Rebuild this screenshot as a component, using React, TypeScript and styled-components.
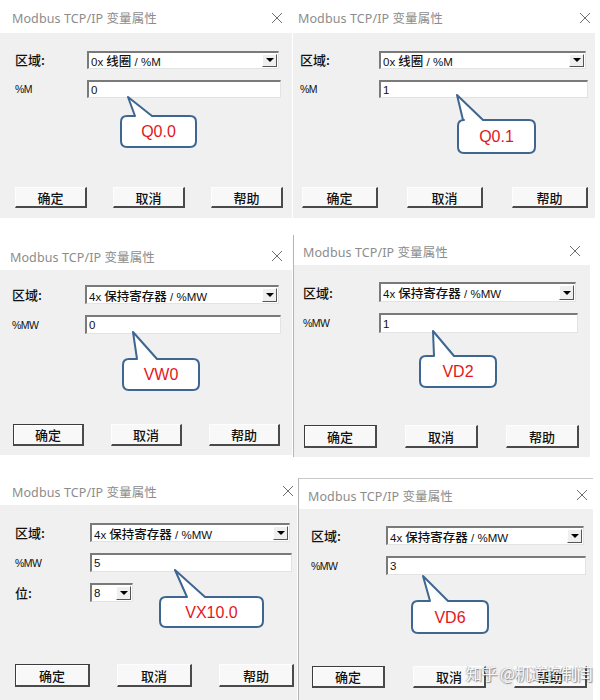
import React from 'react';
import styled, { createGlobalStyle } from 'styled-components';

const GlobalStyle = createGlobalStyle`
  html, body {
    margin: 0;
    padding: 0;
    background: #ffffff;
  }
  body {
    font-family: 'Noto Sans', 'Noto Sans CJK SC', sans-serif;
  }
`;

const CJK = `'Noto Sans CJK SC', 'Noto Sans', sans-serif`;
const SANS = `'Liberation Sans', 'Noto Sans CJK SC', sans-serif`;

const Page = styled.div`
  position: relative;
  width: 600px;
  height: 700px;
  overflow: hidden;
  background: #fff;
`;

const Row = styled.div<{ $h: number }>`
  display: flex;
  height: ${(p) => p.$h}px;
`;

const Cell = styled.div<{ $w: number; $top: number }>`
  width: ${(p) => p.$w}px;
  padding-top: ${(p) => p.$top}px;
  box-sizing: border-box;
  flex-shrink: 0;
`;

const Window = styled.div<{ $w: number; $edge?: boolean; $topEdge?: boolean }>`
  width: ${(p) => p.$w}px;
  display: flex;
  flex-direction: column;
  background: #fff;
  border-left: ${(p) => (p.$edge ? '1px solid #b5b5b5' : 'none')};
  border-top: ${(p) => (p.$topEdge ? '1px solid #c8c8c8' : 'none')};
  box-sizing: border-box;
`;

const TitleBar = styled.div<{ $h: number; $pad: number; $closeRight: number }>`
  height: ${(p) => p.$h}px;
  display: flex;
  align-items: center;
  justify-content: space-between;
  padding: 2px ${(p) => p.$closeRight}px 0 ${(p) => p.$pad}px;
  box-sizing: border-box;
`;

const Title = styled.span`
  font-family: 'Noto Sans', 'Noto Sans CJK SC', sans-serif;
  font-size: 12.5px;
  color: #8c8c8c;
  letter-spacing: 0.1px;
`;

const Body = styled.div<{ $h: number; $top: number; $bottom: number }>`
  position: relative;
  height: ${(p) => p.$h}px;
  background: #f0f0f0;
  padding: ${(p) => p.$top}px 0 ${(p) => p.$bottom}px;
  box-sizing: border-box;
  display: flex;
  flex-direction: column;
`;

const Form = styled.div<{ $label: number; $field: number; $width: number }>`
  display: grid;
  grid-template-columns: ${(p) => p.$field - p.$label}px ${(p) => p.$width}px;
  padding-left: ${(p) => p.$label}px;
  row-gap: 11px;
  align-items: center;
`;

const Label = styled.span<{ $small?: boolean }>`
  font-family: ${(p) => (p.$small ? SANS : CJK)};
  font-size: ${(p) => (p.$small ? '10.5px' : '13px')};
  font-weight: ${(p) => (p.$small ? 400 : 500)};
  color: #111;
  letter-spacing: ${(p) => (p.$small ? '-0.5px' : '0')};
`;

const Sunken = styled.div<{ $h: number; $w?: number }>`
  height: ${(p) => p.$h}px;
  width: ${(p) => (p.$w ? `${p.$w}px` : 'auto')};
  background: #fff;
  border-top: 2px solid #7a7a7a;
  border-left: 2px solid #7a7a7a;
  border-right: 1px solid #e3e3e3;
  border-bottom: 1px solid #e3e3e3;
  box-sizing: border-box;
  display: flex;
  align-items: center;
  padding-left: 2px;
  font-family: ${SANS};
  font-size: 11.5px;
  color: #111;
`;

const SelectText = styled.span`
  flex: 1;
  font-family: ${SANS};
  font-size: 11.5px;
  white-space: nowrap;
  overflow: hidden;
  & b {
    font-family: ${CJK};
    font-weight: 500;
    font-size: 12.5px;
  }
`;

const DropButton = styled.div`
  width: 15px;
  height: calc(100% - 2px);
  margin-right: 1px;
  background: #efefef;
  border-top: 1px solid #fff;
  border-left: 1px solid #fff;
  border-right: 1px solid #555;
  border-bottom: 1px solid #555;
  box-sizing: border-box;
  display: flex;
  align-items: center;
  justify-content: center;
  &::after {
    content: '';
    border-left: 4px solid transparent;
    border-right: 4px solid transparent;
    border-top: 4px solid #000;
  }
`;

const Buttons = styled.div<{ $left: number; $gap: number }>`
  margin-top: auto;
  display: flex;
  gap: ${(p) => p.$gap}px;
  padding-left: ${(p) => p.$left}px;
`;

const Button = styled.div<{ $w: number; $h: number; $default?: boolean }>`
  width: ${(p) => p.$w}px;
  height: ${(p) => p.$h}px;
  box-sizing: border-box;
  background: #f8f8f8;
  border-top: 1px solid ${(p) => (p.$default ? '#3c3c3c' : '#fdfdfd')};
  border-left: 1px solid ${(p) => (p.$default ? '#3c3c3c' : '#fdfdfd')};
  border-right: 2px solid #4a4a4a;
  border-bottom: 2px solid #4a4a4a;
  box-shadow: ${(p) => (p.$default ? 'inset 1px 1px 0 #fff' : 'none')};
  display: flex;
  align-items: center;
  justify-content: center;
  font-family: ${CJK};
  font-size: 13px;
  font-weight: 500;
  color: #111;
`;

const CalloutBox = styled.div`
  position: absolute;
  display: flex;
  align-items: center;
  justify-content: center;
  font-family: ${SANS};
  font-size: 16px;
  color: #e3161d;
  & svg {
    position: absolute;
    inset: 0;
    overflow: visible;
  }
  & span {
    position: relative;
    padding-top: 1px;
  }
`;

const Watermark = styled.div`
  position: absolute;
  left: 466px;
  top: 661px;
  font-family: ${CJK};
  font-size: 16px;
  color: rgba(255, 255, 255, 0.9);
  text-shadow: 1px 1px 1px rgba(60, 60, 60, 0.55), -1px 0 1px rgba(60, 60, 60, 0.35);
  letter-spacing: -0.5px;
  white-space: nowrap;
`;

const CloseIcon = () => (
  <svg width="12" height="12" viewBox="0 0 12 12">
    <path d="M1 1L11 11M11 1L1 11" stroke="#6e6e6e" strokeWidth="1" fill="none" />
  </svg>
);

interface CalloutProps {
  left: number;
  top: number;
  w: number;
  h: number;
  tip: [number, number];
  base: [number, number];
  text: string;
}

const Callout = ({ left, top, w, h, tip, base, text }: CalloutProps) => {
  const r = 6;
  const d = `M${r},0 L${base[0]},0 L${tip[0]},${tip[1]} L${base[1]},0 L${w - r},0 Q${w},0 ${w},${r} L${w},${h - r} Q${w},${h} ${w - r},${h} L${r},${h} Q0,${h} 0,${h - r} L0,${r} Q0,0 ${r},0 Z`;
  return (
    <CalloutBox style={{ left, top, width: w, height: h }}>
      <svg width={w} height={h}>
        <path d={d} fill="#fff" stroke="#3e6690" strokeWidth="2" strokeLinejoin="round" />
      </svg>
      <span>{text}</span>
    </CalloutBox>
  );
};

interface DialogSpec {
  cellW: number;
  cellTop: number;
  winW: number;
  edge?: boolean;
  topEdge?: boolean;
  titleH: number;
  titlePad: number;
  closeRight: number;
  bodyH: number;
  bodyTop: number;
  bodyBottom: number;
  label: number;
  field: number;
  fieldW: number;
  fieldH: number;
  area: 'coil' | 'hold';
  unit: string;
  value: string;
  bit?: boolean;
  btnLeft: number;
  btnGap: number;
  btnW: number;
  btnH: number;
  defaultBtn?: boolean;
  callout: CalloutProps;
}

const Dialog = ({ s }: { s: DialogSpec }) => (
  <Cell $w={s.cellW} $top={s.cellTop}>
    <Window $w={s.winW} $edge={s.edge} $topEdge={s.topEdge}>
      <TitleBar $h={s.titleH} $pad={s.titlePad} $closeRight={s.closeRight}>
        <Title>Modbus TCP/IP 变量属性</Title>
        <CloseIcon />
      </TitleBar>
      <Body $h={s.bodyH} $top={s.bodyTop} $bottom={s.bodyBottom}>
        <Form $label={s.label} $field={s.field} $width={s.fieldW}>
          <Label>区域:</Label>
          <Sunken $h={s.fieldH} style={{ marginRight: 2 }}>
            <SelectText>
              {s.area === 'coil' ? (
                <>0x <b>线圈</b> / %M</>
              ) : (
                <>4x <b>保持寄存器</b> / %MW</>
              )}
            </SelectText>
            <DropButton />
          </Sunken>
          <Label $small>{s.unit}</Label>
          <Sunken $h={s.fieldH}>{s.value}</Sunken>
          {s.bit && (
            <>
              <Label>位:</Label>
              <Sunken $h={s.fieldH} $w={43}>
                <SelectText>8</SelectText>
                <DropButton />
              </Sunken>
            </>
          )}
        </Form>
        <Buttons $left={s.btnLeft} $gap={s.btnGap}>
          <Button $w={s.btnW} $h={s.btnH} $default={s.defaultBtn}>确定</Button>
          <Button $w={s.btnW} $h={s.btnH}>取消</Button>
          <Button $w={s.btnW} $h={s.btnH}>帮助</Button>
        </Buttons>
        <Callout {...s.callout} />
      </Body>
    </Window>
  </Cell>
);

const dialogs: DialogSpec[] = [
  {
    cellW: 293, cellTop: 0, winW: 292, titleH: 33, titlePad: 12, closeRight: 9,
    bodyH: 185, bodyTop: 17, bodyBottom: 10, label: 15, field: 87, fieldW: 194, fieldH: 18,
    area: 'coil', unit: '%M', value: '0',
    btnLeft: 15, btnGap: 26, btnW: 72, btnH: 21,
    callout: { left: 121, top: 83, w: 75, h: 31, tip: [7, -19], base: [14, 31], text: 'Q0.0' },
  },
  {
    cellW: 307, cellTop: 0, winW: 302, titleH: 33, titlePad: 5, closeRight: 4,
    bodyH: 185, bodyTop: 17, bodyBottom: 10, label: 7, field: 86, fieldW: 209, fieldH: 18,
    area: 'coil', unit: '%M', value: '1',
    btnLeft: 9, btnGap: 29, btnW: 76, btnH: 21,
    callout: { left: 165, top: 87, w: 77, h: 33, tip: [-1, -25], base: [5, 25], text: 'Q0.1' },
  },
  {
    cellW: 293, cellTop: 15, winW: 292, titleH: 30, titlePad: 10, closeRight: 9,
    bodyH: 185, bodyTop: 15, bodyBottom: 9, label: 12, field: 85, fieldW: 196, fieldH: 19,
    area: 'hold', unit: '%MW', value: '0',
    btnLeft: 13, btnGap: 27, btnW: 71, btnH: 22, defaultBtn: true,
    callout: { left: 123, top: 89, w: 76, h: 31, tip: [10, -27], base: [14, 34], text: 'VW0' },
  },
  {
    cellW: 307, cellTop: 10, winW: 297, edge: true, titleH: 30, titlePad: 9, closeRight: 9,
    bodyH: 192, bodyTop: 17, bodyBottom: 9, label: 9, field: 85, fieldW: 199, fieldH: 20,
    area: 'hold', unit: '%MW', value: '1',
    btnLeft: 10, btnGap: 28, btnW: 73, btnH: 23, defaultBtn: true,
    callout: { left: 126, top: 91, w: 76, h: 31, tip: [13, -25], base: [14, 34], text: 'VD2' },
  },
  {
    cellW: 298, cellTop: 15, winW: 297, titleH: 30, titlePad: 12, closeRight: 3,
    bodyH: 195, bodyTop: 18, bodyBottom: 13, label: 15, field: 90, fieldW: 202, fieldH: 19,
    area: 'hold', unit: '%MW', value: '5', bit: true,
    btnLeft: 15, btnGap: 27, btnW: 75, btnH: 23, defaultBtn: true,
    callout: { left: 160, top: 92, w: 103, h: 30, tip: [15, -27], base: [27, 45], text: 'VX10.0' },
  },
  {
    cellW: 302, cellTop: 18, winW: 295, edge: true, topEdge: true, titleH: 30, titlePad: 9, closeRight: 5,
    bodyH: 192, bodyTop: 17, bodyBottom: 13, label: 12, field: 87, fieldW: 200, fieldH: 19,
    area: 'hold', unit: '%MW', value: '3',
    btnLeft: 13, btnGap: 28, btnW: 73, btnH: 22, defaultBtn: true,
    callout: { left: 113, top: 92, w: 76, h: 32, tip: [11, -25], base: [18, 36], text: 'VD6' },
  },
];

const App: React.FC = () => (
  <>
    <GlobalStyle />
    <Page>
      <Row $h={225}>
        <Dialog s={dialogs[0]} />
        <Dialog s={dialogs[1]} />
      </Row>
      <Row $h={235}>
        <Dialog s={dialogs[2]} />
        <Dialog s={dialogs[3]} />
      </Row>
      <Row $h={240}>
        <Dialog s={dialogs[4]} />
        <Dialog s={dialogs[5]} />
      </Row>
      <Watermark>知乎 @机道控制闫</Watermark>
    </Page>
  </>
);

export default App;
